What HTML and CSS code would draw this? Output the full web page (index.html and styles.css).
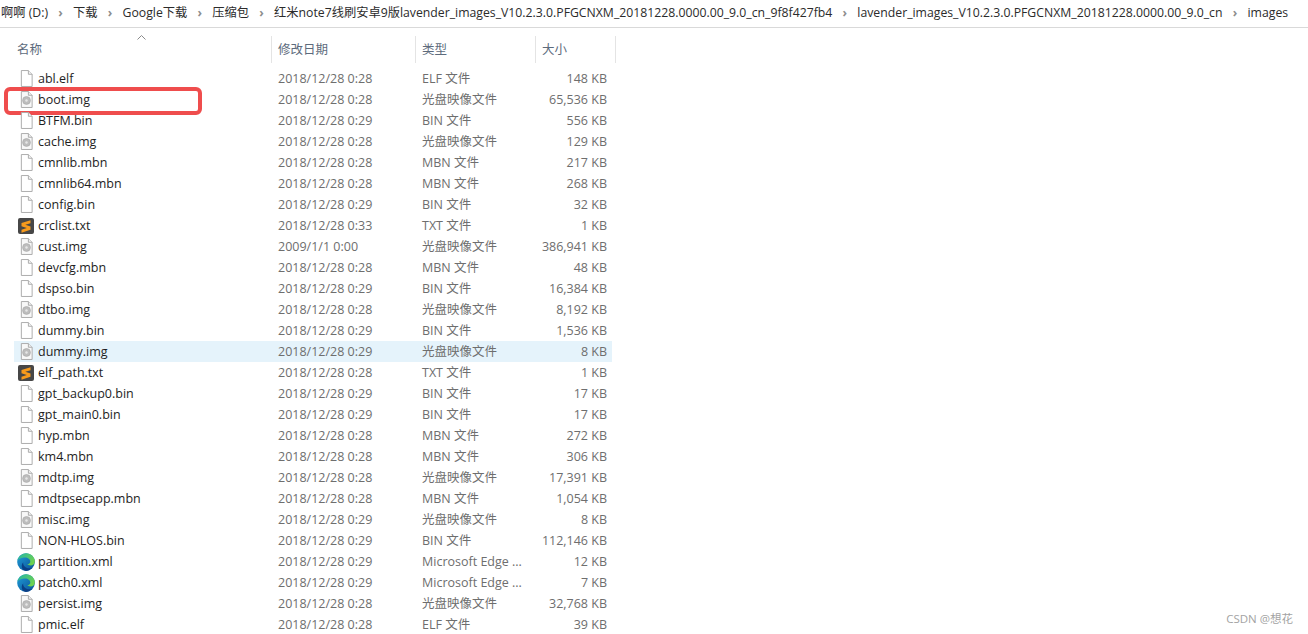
FILE: index.html
```html
<!DOCTYPE html>
<html lang="zh-CN">
<head>
  <meta charset="UTF-8">
  <meta name="viewport" content="width=device-width, initial-scale=1.0">
  <title>images</title>
  <link rel="stylesheet" href="styles.css">
</head>
<body>
  <svg class="sprites" width="0" height="0">
    <defs>
      <linearGradient id="edge-a" x1="0" y1="0" x2="1" y2="1">
        <stop offset="0" stop-color="#1f9fd8"/>
        <stop offset="1" stop-color="#0b4f96"/>
      </linearGradient>
      <linearGradient id="edge-b" x1="0" y1="0" x2="1" y2="0.6">
        <stop offset="0" stop-color="#22b5a8"/>
        <stop offset="1" stop-color="#6fd24f"/>
      </linearGradient>
      <symbol id="i-file" viewBox="0 0 16 18">
        <path d="M2.500 .5h7.500l4 4v13h-11.500z" fill="#fff" stroke="#a9a9a9"/>
        <path d="M10 .5v4h4" fill="#f2f2f2" stroke="#a9a9a9"/>
      </symbol>
      <symbol id="i-img" viewBox="0 0 16 18">
        <path d="M2.500 .5h7.500l4 4v13h-11.500z" fill="#f8f8f8" stroke="#a9a9a9"/>
        <path d="M10 .5v4h4" fill="#eee" stroke="#a9a9a9"/>
        <circle cx="8" cy="10" r="4.200" fill="#bdbdbd" stroke="#a5a5a5" stroke-width=".6"/>
        <circle cx="8" cy="10" r="1.300" fill="#e6e6e6"/>
      </symbol>
      <symbol id="i-sublime" viewBox="0 0 16 16">
        <rect width="16" height="16" rx="2" fill="#474747"/>
        <path d="M3.500 5l9-2.800v3l-5.200 1.600 5.200 1.700v3.300l-9 2.900v-3l5.300-1.700-5.300-1.700z" fill="#f79a1c"/>
      </symbol>
      <symbol id="i-edge" viewBox="0 0 18 18">
        <circle cx="9" cy="9" r="8.800" fill="url(#edge-a)"/>
        <path d="M.5 8c.8-4.700 4.500-7.800 8.800-7.800 4.900 0 8.500 3.800 8.500 8.200 0 2.400-1.900 4-4.200 4-1.500 0-2.800-.5-3.200-1.100 1.900-.2 2.900-1.300 2.900-2.700 0-2.300-2.400-4.100-5.100-4.100-3.300 0-6.900 1.300-7.700 3.500z" fill="url(#edge-b)"/>
        <path d="M6.200 9.500c-.3 3.200 2.400 5.800 5.800 5.800.9 0 1.800-.1 2.500-.4-1.400 1.900-3.400 3-5.600 3-2.200 0-3.600-1.600-4-3.600-.4-2 .3-4 1.300-4.800z" fill="#0a3f86"/>
      </symbol>
    </defs>
  </svg>

  <!-- ruta -->
  <nav class="breadcrumb">
    <span>啊啊 (D:)</span><i class="sep">›</i>
    <span>下载</span><i class="sep">›</i>
    <span>Google下载</span><i class="sep">›</i>
    <span>压缩包</span><i class="sep">›</i>
    <span>红米note7线刷安卓9版lavender_images_V10.2.3.0.PFGCNXM_20181228.0000.00_9.0_cn_9f8f427fb4</span><i class="sep">›</i>
    <span>lavender_images_V10.2.3.0.PFGCNXM_20181228.0000.00_9.0_cn</span><i class="sep">›</i>
    <span>images</span>
  </nav>

  <!-- columnas -->
  <div class="columns">
    <div class="col col-name">名称
      <svg class="sort" width="9" height="5" viewBox="0 0 9 5"><path d="M.5 4.500l4-4 4 4" fill="none" stroke="#8a8a8a"/></svg>
    </div>
    <div class="col col-date">修改日期</div>
    <div class="col col-type">类型</div>
    <div class="col col-size">大小</div>
  </div>

  <div class="list">
    <div class="row"><svg class="ico"><use href="#i-file"/></svg><span class="name">abl.elf</span><span class="cell">2018/12/28 0:28</span><span class="cell">ELF 文件</span><span class="cell size">148 KB</span></div>
    <div class="row boot"><svg class="ico"><use href="#i-img"/></svg><span class="name">boot.img</span><span class="cell">2018/12/28 0:28</span><span class="cell">光盘映像文件</span><span class="cell size">65,536 KB</span><div class="highlight"></div></div>
    <div class="row"><svg class="ico"><use href="#i-file"/></svg><span class="name">BTFM.bin</span><span class="cell">2018/12/28 0:29</span><span class="cell">BIN 文件</span><span class="cell size">556 KB</span></div>
    <div class="row"><svg class="ico"><use href="#i-img"/></svg><span class="name">cache.img</span><span class="cell">2018/12/28 0:28</span><span class="cell">光盘映像文件</span><span class="cell size">129 KB</span></div>
    <div class="row"><svg class="ico"><use href="#i-file"/></svg><span class="name">cmnlib.mbn</span><span class="cell">2018/12/28 0:28</span><span class="cell">MBN 文件</span><span class="cell size">217 KB</span></div>
    <div class="row"><svg class="ico"><use href="#i-file"/></svg><span class="name">cmnlib64.mbn</span><span class="cell">2018/12/28 0:28</span><span class="cell">MBN 文件</span><span class="cell size">268 KB</span></div>
    <div class="row"><svg class="ico"><use href="#i-file"/></svg><span class="name">config.bin</span><span class="cell">2018/12/28 0:29</span><span class="cell">BIN 文件</span><span class="cell size">32 KB</span></div>
    <div class="row"><svg class="ico ico-sublime"><use href="#i-sublime"/></svg><span class="name">crclist.txt</span><span class="cell">2018/12/28 0:33</span><span class="cell">TXT 文件</span><span class="cell size">1 KB</span></div>
    <div class="row"><svg class="ico"><use href="#i-img"/></svg><span class="name">cust.img</span><span class="cell">2009/1/1 0:00</span><span class="cell">光盘映像文件</span><span class="cell size">386,941 KB</span></div>
    <div class="row"><svg class="ico"><use href="#i-file"/></svg><span class="name">devcfg.mbn</span><span class="cell">2018/12/28 0:28</span><span class="cell">MBN 文件</span><span class="cell size">48 KB</span></div>
    <div class="row"><svg class="ico"><use href="#i-file"/></svg><span class="name">dspso.bin</span><span class="cell">2018/12/28 0:29</span><span class="cell">BIN 文件</span><span class="cell size">16,384 KB</span></div>
    <div class="row"><svg class="ico"><use href="#i-img"/></svg><span class="name">dtbo.img</span><span class="cell">2018/12/28 0:28</span><span class="cell">光盘映像文件</span><span class="cell size">8,192 KB</span></div>
    <div class="row"><svg class="ico"><use href="#i-file"/></svg><span class="name">dummy.bin</span><span class="cell">2018/12/28 0:29</span><span class="cell">BIN 文件</span><span class="cell size">1,536 KB</span></div>
    <div class="row selected"><svg class="ico"><use href="#i-img"/></svg><span class="name">dummy.img</span><span class="cell">2018/12/28 0:29</span><span class="cell">光盘映像文件</span><span class="cell size">8 KB</span></div>
    <div class="row"><svg class="ico ico-sublime"><use href="#i-sublime"/></svg><span class="name">elf_path.txt</span><span class="cell">2018/12/28 0:28</span><span class="cell">TXT 文件</span><span class="cell size">1 KB</span></div>
    <div class="row"><svg class="ico"><use href="#i-file"/></svg><span class="name">gpt_backup0.bin</span><span class="cell">2018/12/28 0:29</span><span class="cell">BIN 文件</span><span class="cell size">17 KB</span></div>
    <div class="row"><svg class="ico"><use href="#i-file"/></svg><span class="name">gpt_main0.bin</span><span class="cell">2018/12/28 0:29</span><span class="cell">BIN 文件</span><span class="cell size">17 KB</span></div>
    <div class="row"><svg class="ico"><use href="#i-file"/></svg><span class="name">hyp.mbn</span><span class="cell">2018/12/28 0:28</span><span class="cell">MBN 文件</span><span class="cell size">272 KB</span></div>
    <div class="row"><svg class="ico"><use href="#i-file"/></svg><span class="name">km4.mbn</span><span class="cell">2018/12/28 0:28</span><span class="cell">MBN 文件</span><span class="cell size">306 KB</span></div>
    <div class="row"><svg class="ico"><use href="#i-img"/></svg><span class="name">mdtp.img</span><span class="cell">2018/12/28 0:28</span><span class="cell">光盘映像文件</span><span class="cell size">17,391 KB</span></div>
    <div class="row"><svg class="ico"><use href="#i-file"/></svg><span class="name">mdtpsecapp.mbn</span><span class="cell">2018/12/28 0:28</span><span class="cell">MBN 文件</span><span class="cell size">1,054 KB</span></div>
    <div class="row"><svg class="ico"><use href="#i-img"/></svg><span class="name">misc.img</span><span class="cell">2018/12/28 0:29</span><span class="cell">光盘映像文件</span><span class="cell size">8 KB</span></div>
    <div class="row"><svg class="ico"><use href="#i-file"/></svg><span class="name">NON-HLOS.bin</span><span class="cell">2018/12/28 0:29</span><span class="cell">BIN 文件</span><span class="cell size">112,146 KB</span></div>
    <div class="row"><svg class="ico ico-edge"><use href="#i-edge"/></svg><span class="name">partition.xml</span><span class="cell">2018/12/28 0:29</span><span class="cell">Microsoft Edge ...</span><span class="cell size">12 KB</span></div>
    <div class="row"><svg class="ico ico-edge"><use href="#i-edge"/></svg><span class="name">patch0.xml</span><span class="cell">2018/12/28 0:29</span><span class="cell">Microsoft Edge ...</span><span class="cell size">7 KB</span></div>
    <div class="row"><svg class="ico"><use href="#i-img"/></svg><span class="name">persist.img</span><span class="cell">2018/12/28 0:28</span><span class="cell">光盘映像文件</span><span class="cell size">32,768 KB</span></div>
    <div class="row"><svg class="ico"><use href="#i-file"/></svg><span class="name">pmic.elf</span><span class="cell">2018/12/28 0:28</span><span class="cell">ELF 文件</span><span class="cell size">39 KB</span></div>
  </div>

  <div class="watermark">CSDN @想花</div>
</body>
</html>
```

FILE: styles.css
```css
html, body {
  height: 100%;
}
body {
  margin: 0;
  background-color: #fff;
  color: #1e1e1e;
  font-family: "Open Sans", "Noto Sans CJK SC", sans-serif;
  font-size: 12.5px;
  line-height: 17px;
  overflow: hidden;
  position: relative;
}
.sprites {
  position: absolute;
}
.breadcrumb {
  height: 28px;
  padding-bottom: 3px;
  box-sizing: border-box;
  border-bottom: 1px solid #d9d9d9;
  display: flex;
  align-items: center;
  white-space: nowrap;
  padding-left: 1px;
  font-size: 12.25px;
  color: #2b2b2b;
}
.sep {
  font-style: normal;
  font-weight: bold;
  color: #8d8d8d;
  width: 25px;
  text-align: center;
}
.columns {
  display: flex;
  height: 27px;
  margin-top: 8px;
  color: #5d6b7c;
}
.col {
  display: flex;
  align-items: center;
  padding-left: 6px;
  box-sizing: border-box;
  border-right: 1px solid #e4e4e4;
  position: relative;
}
.col-name {
  width: 272px;
  padding-left: 17px;
}
.col-date {
  width: 144px;
}
.col-type {
  width: 120px;
}
.col-size {
  width: 80px;
}
.sort {
  position: absolute;
  left: 137px;
  top: -1px;
}
.list {
  margin-top: 5px;
  margin-left: 14px;
  width: 598px;
}
.row {
  display: grid;
  grid-template-columns: 24px 240px 144px 100px 85px;
  align-items: center;
  height: 21px;
  position: relative;
}
.row.selected {
  background-color: #e5f3fb;
}
.ico {
  width: 15px;
  height: 17px;
  margin-left: 5px;
}
.ico-sublime {
  width: 16px;
  height: 16px;
  margin-left: 4px;
}
.ico-edge {
  width: 18px;
  height: 18px;
  margin-left: 3px;
}
.cell {
  color: #6e6e6e;
}
.size {
  text-align: right;
}
.highlight {
  position: absolute;
  left: -10px;
  top: -2px;
  width: 190px;
  height: 20px;
  border: 4px solid #ef4d4d;
  border-radius: 6px;
}
.watermark {
  position: absolute;
  right: 15px;
  bottom: 7px;
  color: #a3a3a3;
  font-size: 11.5px;
}
```
